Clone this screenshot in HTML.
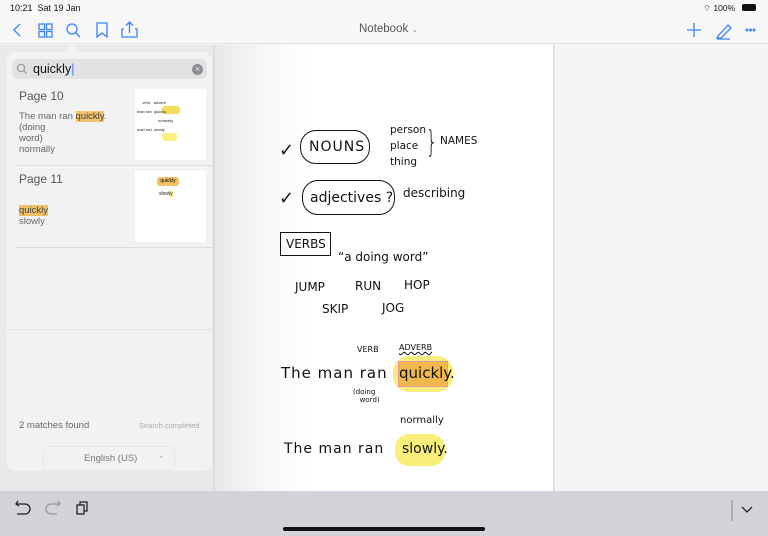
<!DOCTYPE html>
<html><head><meta charset="utf-8"><style>
*{margin:0;padding:0;box-sizing:border-box}
body{width:768px;height:536px;overflow:hidden;background:#f5f5f5;font-family:"Liberation Sans",sans-serif;position:relative}
.a{position:absolute}
.hw{position:absolute;color:#111;font-family:"DejaVu Sans",sans-serif;white-space:nowrap}
</style></head><body>
<div class="a" style="left:0;top:0;width:768px;height:44px;background:#f7f7f7;border-bottom:1px solid #e2e2e2"></div>
<div class="a" style="left:10px;top:3px;font-size:9px;color:#111">10:21&nbsp;&nbsp;Sat 19 Jan</div>
<div class="a" style="left:703px;top:3px;font-size:8.5px;color:#111">⌔ 100%</div>
<div class="a" style="left:742px;top:4px;width:14px;height:7px;background:#111;border-radius:2px"></div>
<div class="a" style="left:359px;top:23px;font-size:11.5px;color:#555">Notebook <span style="font-size:8px;color:#999">⌄</span></div>
<svg class="a" style="left:0;top:18px" width="150" height="24" fill="none" stroke="#3a82f7" stroke-width="1.3">
<path d="M20 6 L14 12 L20 18"/>
<rect x="39" y="6" width="5.5" height="5.5"/><rect x="46.5" y="6" width="5.5" height="5.5"/><rect x="39" y="13.5" width="5.5" height="5.5"/><rect x="46.5" y="13.5" width="5.5" height="5.5"/>
<circle cx="72" cy="11" r="5"/><path d="M75.5 14.5 L80 19"/>
<path d="M97 5 H107 V19 L102 15 L97 19 Z"/>
<path d="M124 11 H122 V19 H137 V11 H135 M129.5 15 V4 M126 7.5 L129.5 4 L133 7.5"/>
</svg>
<svg class="a" style="left:680px;top:18px" width="88" height="24" fill="none" stroke="#3a82f7" stroke-width="1.3">
<path d="M14 5 V19 M7 12 H21"/>
<path d="M38 18 L48 7 L51 10 L41 20 H37 Z M37 21 H50"/>
<circle cx="67" cy="12" r=".8" fill="#3a82f7"/><circle cx="70.5" cy="12" r=".8" fill="#3a82f7"/><circle cx="74" cy="12" r=".8" fill="#3a82f7"/>
</svg>
<div class="a" style="left:0;top:45px;width:214px;height:446px;background:#e9e9e9"></div>
<div class="a" style="left:213px;top:45px;width:2px;height:446px;background:#dcdcdc"></div>
<div class="a" style="left:215px;top:45px;width:339px;height:446px;background:linear-gradient(90deg,#e8e8e8 0,#fafafa 60px,#fff 100px)"></div>
<div class="a" style="left:553px;top:45px;width:2px;height:446px;background:#e4e4e4"></div>
<div class="a" style="left:66px;top:46px;width:12px;height:12px;background:#f2f2f2;transform:rotate(45deg)"></div>
<div class="a" style="left:7px;top:52px;width:205px;height:419px;background:#f2f2f2;border-radius:9px"></div>
<div class="a" style="left:12px;top:59px;width:195px;height:20px;background:#e2e2e4;border-radius:6px"></div>
<svg class="a" style="left:16px;top:63px" width="12" height="12" fill="none" stroke="#999" stroke-width="1.2"><circle cx="5" cy="5" r="3.6"/><path d="M7.6 7.6 L10.5 10.5"/></svg>
<div class="a" style="left:33px;top:62px;font-size:12.5px;color:#111">quickly<span style="color:#3a82f7;font-weight:100">|</span></div>
<div class="a" style="left:192px;top:64px;width:11px;height:11px;border-radius:50%;background:#8e8e93;color:#eee;font-size:9px;line-height:11px;text-align:center">×</div>
<div class="a" style="left:19px;top:89px;font-size:12px;color:#555">Page 10</div>
<div class="a" style="left:19px;top:111px;font-size:9.5px;color:#666;line-height:11px">The man ran <span style="background:#f0c06a;color:#444">quickly</span>.<br>(doing<br>word)<br>normally</div>
<div class="a" style="left:135px;top:89px;width:71px;height:71px;background:#fff"></div>
<div class="a" style="left:162px;top:106px;width:18px;height:8px;background:#f4dd5a;border-radius:3px"></div>
<div class="a" style="left:162px;top:133px;width:15px;height:8px;background:#f7f07a;border-radius:3px"></div>
<div class="a" style="left:137px;top:98px;font-size:4px;line-height:9px;color:#222">&nbsp;&nbsp;&nbsp;&nbsp;&nbsp;verb &nbsp;&nbsp;adverb<br>man ran &nbsp;quickly<br>&nbsp;&nbsp;&nbsp;&nbsp;&nbsp;&nbsp;&nbsp;&nbsp;&nbsp;&nbsp;&nbsp;&nbsp;&nbsp;&nbsp;&nbsp;&nbsp;&nbsp;&nbsp;&nbsp;normally<br>man ran &nbsp;slowly</div>
<div class="a" style="left:16px;top:165px;width:196px;height:1px;background:#ddd"></div>
<div class="a" style="left:19px;top:172px;font-size:12px;color:#555">Page 11</div>
<div class="a" style="left:19px;top:205px;font-size:9.5px;color:#666;line-height:11px"><span style="background:#f0c06a;color:#444">quickly</span><br>slowly</div>
<div class="a" style="left:135px;top:171px;width:71px;height:71px;background:#fff"></div>
<div class="a" style="left:157px;top:177px;width:22px;height:9px;background:#f0c06a;border-radius:3px;font-size:5px;line-height:9px;text-align:center">quickly</div>
<div class="a" style="left:159px;top:191px;font-size:5px;color:#222">slow<span style="background:#f7f07a">ly</span></div>
<div class="a" style="left:16px;top:247px;width:196px;height:1px;background:#ddd"></div>
<div class="a" style="left:7px;top:329px;width:205px;height:1px;background:#e4e4e4"></div>
<div class="a" style="left:19px;top:420px;font-size:9.5px;color:#666">2 matches found</div>
<div class="a" style="left:139px;top:421px;font-size:7.5px;color:#aaa">Search completed</div>
<div class="a" style="left:43px;top:446px;width:132px;height:25px;border:1px solid #e6e6e6;border-radius:5px;background:#f2f2f2"></div>
<div class="a" style="left:84px;top:453px;font-size:9.5px;color:#777">English (US)</div>
<div class="a" style="left:158px;top:451px;font-size:8px;color:#aaa">⌄</div>
<div class="hw" style="left:279px;top:140px;font-size:18px">✓</div>
<div class="a" style="left:300px;top:130px;width:70px;height:34px;border:1.5px solid #111;border-radius:16px"></div>
<div class="hw" style="left:309px;top:139px;font-size:14px;letter-spacing:1px">NOUNS</div>
<div class="hw" style="left:390px;top:122px;font-size:10.5px;line-height:16px">person<br>place<br>thing</div>
<div class="hw" style="left:422px;top:125px;font-size:30px;font-weight:100;transform:scaleX(.6)">}</div>
<div class="hw" style="left:440px;top:135px;font-size:10.5px">NAMES</div>
<div class="hw" style="left:279px;top:188px;font-size:18px">✓</div>
<div class="a" style="left:302px;top:180px;width:93px;height:35px;border:1.5px solid #111;border-radius:16px"></div>
<div class="hw" style="left:310px;top:190px;font-size:14px">adjectives ?</div>
<div class="hw" style="left:403px;top:186px;font-size:12px">describing</div>
<div class="a" style="left:280px;top:232px;width:51px;height:24px;border:1.5px solid #111"></div>
<div class="hw" style="left:286px;top:237px;font-size:12px">VERBS</div>
<div class="hw" style="left:338px;top:250px;font-size:12px">“a doing word”</div>
<div class="hw" style="left:295px;top:280px;font-size:12px">JUMP</div>
<div class="hw" style="left:355px;top:279px;font-size:12px">RUN</div>
<div class="hw" style="left:404px;top:278px;font-size:12px">HOP</div>
<div class="hw" style="left:322px;top:302px;font-size:12px">SKIP</div>
<div class="hw" style="left:382px;top:301px;font-size:12px">JOG</div>
<div class="hw" style="left:357px;top:345px;font-size:8px">VERB</div>
<div class="hw" style="left:399px;top:343px;font-size:8px;text-decoration:underline wavy">ADVERB</div>
<div class="a" style="left:393px;top:356px;width:60px;height:36px;background:#f7ec7e;border-radius:16px"></div>
<div class="a" style="left:398px;top:361px;width:50px;height:26px;background:#f0b84c;border:1px solid #e99"></div>
<div class="hw" style="left:281px;top:364px;font-size:15px;letter-spacing:1px">The man ran</div>
<div class="hw" style="left:399px;top:364px;font-size:15px">quickly.</div>
<div class="hw" style="left:353px;top:388px;font-size:7px;line-height:8px">(doing<br>&nbsp;&nbsp;&nbsp;word)</div>
<div class="hw" style="left:400px;top:415px;font-size:10px">normally</div>
<div class="a" style="left:395px;top:434px;width:50px;height:32px;background:#f7ef7a;border-radius:14px"></div>
<div class="hw" style="left:284px;top:441px;font-size:14px;letter-spacing:1px">The man ran</div>
<div class="hw" style="left:402px;top:441px;font-size:14px">slowly.</div>
<div class="a" style="left:0;top:491px;width:768px;height:45px;background:#d1d3d8"></div>
<svg class="a" style="left:0;top:491px" width="768" height="45" fill="none" stroke-width="1.3">
<path d="M18 14 L16 17 L19 19 M16 17 H25 A5 5 0 0 1 25 27 H17" stroke="#222" transform="translate(0,-4)"/>
<path d="M58 14 L60 17 L57 19 M60 17 H51 A5 5 0 0 0 51 27 H57" stroke="#999" transform="translate(0,-4)"/>
<rect x="77" y="14" width="7" height="9" stroke="#222"/><path d="M80 14 V11 H87 V20 H84" stroke="#222"/>
<path d="M732 9 V30" stroke="#999"/>
<path d="M742 16 L747 21 L752 16" stroke="#222"/>
</svg>
<div class="a" style="left:283px;top:527px;width:202px;height:4px;background:#111;border-radius:2px"></div>
</body></html>
